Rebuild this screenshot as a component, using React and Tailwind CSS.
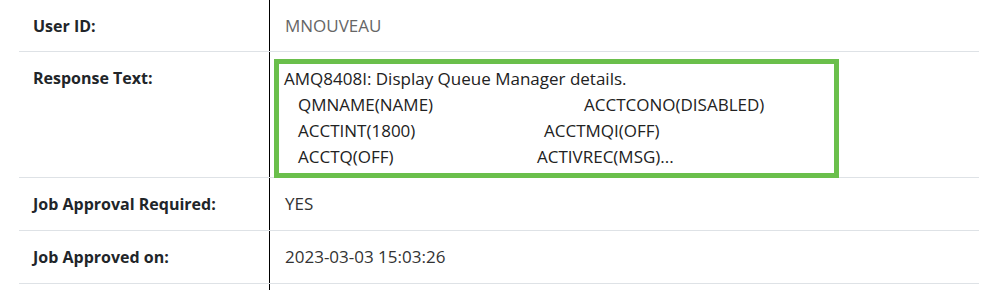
export default function App() {
  const font = { fontFamily: '"Open Sans", "Noto Sans", sans-serif' };
  const label = "w-[250px] shrink-0 pl-[14px] font-bold text-[16px] text-[#212529]";
  return (
    <div className="w-[998px] h-[290px] bg-white overflow-hidden" style={font}>
      <div className="ml-[19px] w-[960px]">
        <div className="flex h-[52px] border-b border-[#dee2e6]">
          <div className={label + " flex items-center"}>User ID:</div>
          <div className="flex-1 border-l border-black pl-[15px] flex items-center text-[17px] text-[#666]">
            MNOUVEAU
          </div>
        </div>
        <div className="flex h-[126px] border-b border-[#dee2e6]">
          <div className={label + " pt-[13px] leading-[26px]"}>Response Text:</div>
          <div className="flex-1 border-l border-black pl-[4px] pt-[7px]">
            <div className="w-[565px] h-[119px] border-[5px] border-[#6abf4b] px-[5px] py-[2px] text-[17px] leading-[26px] text-[#222] whitespace-nowrap">
              <div>AMQ8408I: Display Queue Manager details.</div>
              <div className="flex pl-[14px]">
                <span className="w-[286px]">QMNAME(NAME)</span>
                <span>ACCTCONO(DISABLED)</span>
              </div>
              <div className="flex pl-[14px]">
                <span className="w-[246px]">ACCTINT(1800)</span>
                <span>ACCTMQI(OFF)</span>
              </div>
              <div className="flex pl-[14px]">
                <span className="w-[239px]">ACCTQ(OFF)</span>
                <span>ACTIVREC(MSG)...</span>
              </div>
            </div>
          </div>
        </div>
        <div className="flex h-[53px] border-b border-[#dee2e6]">
          <div className={label + " flex items-center"}>Job Approval Required:</div>
          <div className="flex-1 border-l border-black pl-[15px] flex items-center text-[17px] text-[#333]">
            YES
          </div>
        </div>
        <div className="flex h-[53px] border-b border-[#dee2e6]">
          <div className={label + " flex items-center"}>Job Approved on:</div>
          <div className="flex-1 border-l border-black pl-[15px] flex items-center text-[17px] text-[#333]">
            2023-03-03 15:03:26
          </div>
        </div>
        <div className="flex h-[20px]">
          <div className="w-[250px] shrink-0"></div>
          <div className="flex-1 border-l border-black"></div>
        </div>
      </div>
    </div>
  );
}
